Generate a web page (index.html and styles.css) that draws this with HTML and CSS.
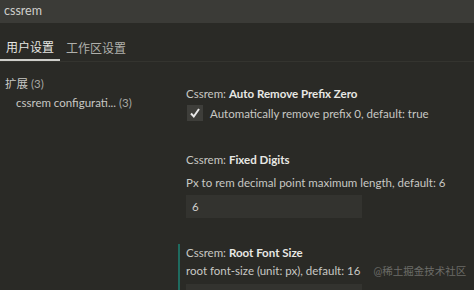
FILE: index.html
```html
<!DOCTYPE html>
<html>
<head>
<meta charset="utf-8">
<link rel="stylesheet" href="styles.css">
</head>
<body>
<div class="titlebar">cssrem</div>
<div class="tabs">
  <div class="tab active">用户设置</div>
  <div class="tab">工作区设置</div>
</div>
<div class="main">
  <div class="sidebar">
    <div class="group">扩展 <span class="count">(3)</span></div>
    <div class="sub">cssrem configurati... <span class="count">(3)</span></div>
  </div>
  <div class="content">
    <div class="setting s1">
      <div class="stitle">Cssrem: <b>Auto Remove Prefix Zero</b></div>
      <div class="checkrow">
        <span class="checkbox"><svg width="16" height="16" viewBox="0 0 16 16"><path d="M4 8.5 L6.8 11.5 L12 4" fill="none" stroke="#e8e8e8" stroke-width="2"/></svg></span>
        <span class="desc">Automatically remove prefix 0, default: true</span>
      </div>
    </div>
    <div class="setting s2">
      <div class="stitle">Cssrem: <b>Fixed Digits</b></div>
      <div class="desc">Px to rem decimal point maximum length, default: 6</div>
      <div class="input">6</div>
    </div>
    <div class="setting s3">
      <div class="stitle">Cssrem: <b>Root Font Size</b></div>
      <div class="descrow"><span class="desc">root font-size (unit: px), default: 16</span><span class="wm">@稀土掘金技术社区</span></div>
      <div class="input"></div>
    </div>
  </div>
</div>
</body>
</html>
```
FILE: styles.css
```css
* { box-sizing: border-box; }
html, body { margin: 0; padding: 0; }
body {
  width: 474px; height: 290px; overflow: hidden;
  background: #2a2a26;
  font-family: Lato, "Noto Sans CJK SC", sans-serif;
  font-size: 11.5px;
  color: #c8c8c4;
  white-space: nowrap;
}
.titlebar {
  height: 23px; background: #3b3b37;
  padding-left: 4px; line-height: 22px; color: #cfcfcb; font-size: 12.5px;
}
.tabs {
  display: flex; height: 39px;
  border-bottom: 1px solid #34342f;
}
.tab {
  padding: 0 6px; height: 100%; display: flex; align-items: center;
  padding-top: 10px; font-size: 12px; color: #b0b0ab;
  font-family: "Noto Sans CJK SC", sans-serif;
}
.tab.active { color: #e6e6e2; border-bottom: 2px solid #cfcfcb; }
.main { display: flex; }
.sidebar { width: 178px; flex-shrink: 0; padding-top: 12px; font-size: 11.5px; }
.group { padding-left: 5px; height: 19px; line-height: 19px; }
.sub { padding-left: 16px; height: 19px; line-height: 19px; }
.count { color: #a8a8a4; }
.content { flex: 1; min-width: 0; }
.setting { padding-left: 8px; }
.stitle { color: #c8c8c4; height: 18px; line-height: 18px; }
.stitle b { color: #e8e8e4; font-weight: 700; }
.s1 { padding-top: 23px; }
.checkrow { display: flex; align-items: center; height: 20px; }
.checkbox {
  width: 16px; height: 16px; background: #3e3e3a; margin-left: 1px; margin-right: 7px;
  display: flex;
}
.s2 { padding-top: 28px; }
.s2 .desc { height: 22px; line-height: 22px; margin-top: 3px; }
.input {
  width: 176px; height: 23px; background: #33332f; margin-top: 1px;
  padding-left: 6px; line-height: 23px; color: #d0d0cc;
}
.s3 { margin-top: 26px; border-left: 2px solid #1f6b5f; padding-left: 6px; }
.s3 .stitle { height: 17px; line-height: 17px; }
.descrow { display: flex; align-items: center; height: 18px; }
.wm { margin-left: 13px; color: #6c6c68; font-size: 10.5px; }
.s3 .input { margin-top: 5px; }
```
